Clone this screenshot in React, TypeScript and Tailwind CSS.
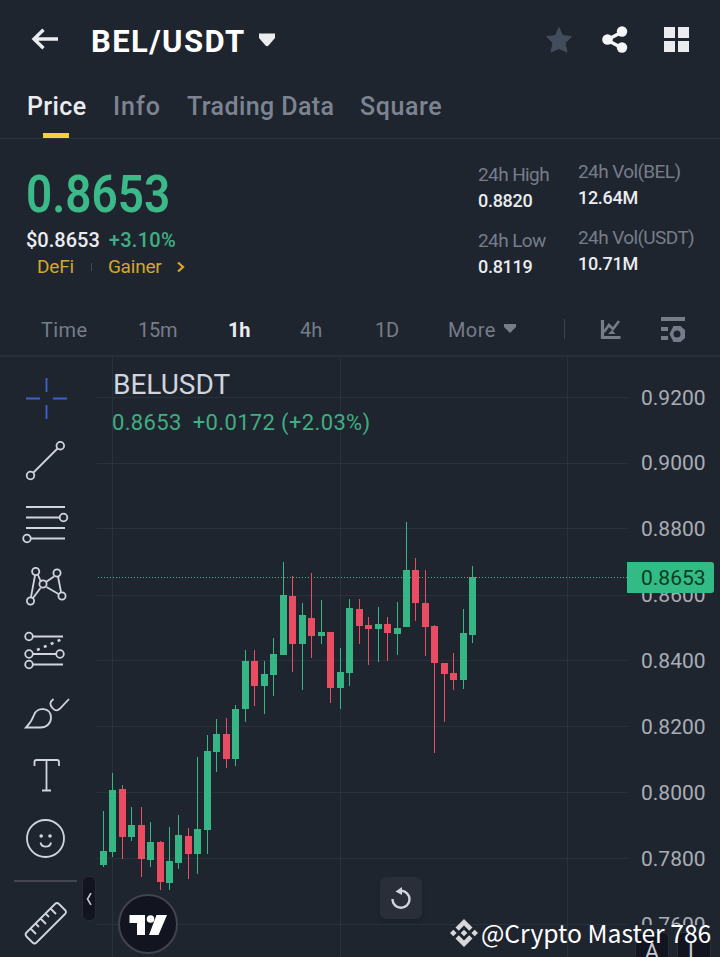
import type { ReactNode } from 'react'

type Candle = [x: number, high: number, top: number, bottom: number, low: number, up: number]

// x is the left side of the body, the rest are y positions
const candles: Candle[] = [
  [100, 811, 851, 865, 867, 1],
  [109, 773, 790, 852, 857, 1],
  [119, 785, 789, 837, 859, 0],
  [128, 807, 825, 837, 841, 1],
  [138, 807, 825, 859, 877, 0],
  [147, 822, 842, 860, 867, 1],
  [157, 841, 842, 882, 890, 0],
  [166, 827, 861, 883, 890, 1],
  [175, 815, 835, 863, 869, 1],
  [185, 828, 836, 854, 879, 0],
  [194, 757, 829, 854, 874, 1],
  [204, 735, 751, 830, 854, 1],
  [213, 719, 734, 752, 772, 1],
  [223, 718, 734, 759, 768, 0],
  [232, 705, 709, 759, 766, 1],
  [242, 650, 661, 709, 722, 1],
  [251, 650, 661, 686, 706, 0],
  [261, 661, 674, 686, 714, 1],
  [270, 638, 654, 675, 696, 1],
  [280, 562, 595, 655, 655, 1],
  [289, 576, 596, 644, 672, 0],
  [299, 603, 615, 644, 690, 1],
  [308, 573, 618, 636, 658, 0],
  [318, 600, 632, 636, 644, 1],
  [327, 632, 632, 688, 703, 0],
  [337, 648, 672, 688, 709, 1],
  [346, 599, 608, 673, 686, 1],
  [356, 599, 609, 626, 644, 0],
  [365, 617, 625, 629, 665, 0],
  [375, 607, 624, 629, 662, 1],
  [384, 617, 624, 633, 661, 0],
  [394, 602, 628, 634, 655, 1],
  [403, 522, 570, 627, 627, 1],
  [412, 558, 570, 603, 621, 0],
  [422, 570, 603, 627, 656, 0],
  [431, 625, 626, 663, 753, 0],
  [441, 663, 663, 674, 722, 0],
  [450, 653, 673, 680, 690, 0],
  [460, 609, 633, 680, 689, 1],
  [469, 566, 577, 635, 643, 1],
]

const gridRows = [397, 463, 528, 595, 660, 726, 792, 858, 924]
const gridCols = [112, 340, 567]
const prices = ['0.9200', '0.9000', '0.8800', '0.8600', '0.8400', '0.8200', '0.8000', '0.7800', '0.7600']

function Header() {
  return (
    <header className="flex h-20 items-center pl-[31px] pr-[31px]">
      <svg className="-mt-0.5" width="28" height="22" viewBox="0 0 28 22" fill="none" stroke="#eaecef" strokeWidth="3.400">
        <path d="M27 11H3M12.500 1.800L3 11l9.500 9.200" />
      </svg>
      <h1 className="ml-8 mt-0.5 w-[155px] whitespace-nowrap text-[31px] font-bold leading-none tracking-[1.4px] text-white">BEL/USDT</h1>
      <svg className="ml-3" width="18" height="14" viewBox="0 0 18 14" fill="#eaecef">
        <path d="M1 .5h16v4.500l-6.500 7.500q-1.500 1.500-3 0L1 5z" />
      </svg>
      <div className="ml-auto flex items-center">
        <svg width="28" height="28" viewBox="0 0 28 28" fill="#434c5a" stroke="#434c5a" strokeLinejoin="round">
          <path d="M14 1.500l3.700 8.200 8.800.8-6.500 6.300 2 9.200-8-3.500-8 3.500 2-9.200-6.500-6.300 8.800-.8z" />
        </svg>
        <svg className="ml-7 mr-px" width="27" height="28" viewBox="0 0 27 28" fill="#f4f5f7">
          <path d="M21 6L6 14l15 8" fill="none" stroke="#f4f5f7" strokeWidth="3.400" />
          <circle cx="21" cy="5.500" r="5.200" />
          <circle cx="6.500" cy="13.500" r="5.300" />
          <circle cx="21" cy="21.500" r="5.200" />
        </svg>
        <svg className="-mt-px ml-[35px]" width="25" height="25" viewBox="0 0 25 25" fill="#eaecef">
          <path d="M0 0h11v11H0zM14 0h11v11H14zM0 14h11v11H0zM14 14h11v11H14z" />
        </svg>
      </div>
    </header>
  )
}

function Tabs() {
  return (
    <nav className="flex h-[59px] border-b border-[#2c333d] pl-[27px] pt-3 text-[25px] font-medium leading-[30px] text-[#7d8491]">
      <div className="flex w-[86px] flex-col">
        <span className="whitespace-nowrap tracking-[0.4px] text-[#eaecef]">Price</span>
        <span className="ml-4 mt-[11px] h-[5px] w-[26px] bg-[#f2d046]" />
      </div>
      <span className="w-[74px] tracking-[1px]">Info</span>
      <span className="w-[173px] whitespace-nowrap tracking-[0.4px]">Trading Data</span>
      <span className="tracking-[0.6px]">Square</span>
    </nav>
  )
}

function Stat({ label, value }: { label: string; value: string }) {
  return (
    <div className="h-[66px] whitespace-nowrap">
      <p className="text-[19px] leading-[26px] tracking-[-0.6px] text-[#767d89]">{label}</p>
      <p className="text-lg font-medium leading-[26px] tracking-[-0.3px] text-[#eaecef]">{value}</p>
    </div>
  )
}

function Summary() {
  return (
    <section className="flex h-[166px]">
      <div className="w-[478px] pl-[26px] pt-[29px]">
        <p className="origin-left scale-x-[0.9] text-[51px] font-semibold leading-[53px] text-[#3cb988]">0.8653</p>
        <p className="mt-1.5 flex gap-[9px] text-xl font-medium leading-[26px]">
          <span className="text-[#eaecef]">$0.8653</span>
          <span className="tracking-[0.3px] text-[#3fae83]">+3.10%</span>
        </p>
        <p className="flex items-center pl-[11px] text-[19px] leading-7 tracking-[-0.200px] text-[#d3a62c]">
          <span>DeFi</span>
          <span className="ml-[17px] mr-[16px] h-2 w-px bg-[#434954]" />
          <span>Gainer</span>
          <svg className="ml-[15px]" width="8" height="12" viewBox="0 0 8 12" fill="none" stroke="#dba72c" strokeWidth="2.200">
            <path d="M1 1.500L6 6l-5 4.500" />
          </svg>
        </p>
      </div>
      <div className="w-[100px] pt-[23px]">
        <Stat label="24h High" value="0.8820" />
        <Stat label="24h Low" value="0.8119" />
      </div>
      <div className="pt-5">
        <Stat label="24h Vol(BEL)" value="12.64M" />
        <Stat label="24h Vol(USDT)" value="10.71M" />
      </div>
    </section>
  )
}

function Intervals() {
  return (
    <div className="flex h-[52px] items-center border-b-2 border-[#292f39] pl-[41px] text-xl tracking-[0.4px] text-[#767d89]">
      <span className="w-[97px]">Time</span>
      <span className="w-[90px] tracking-[-0.2px]">15m</span>
      <span className="w-[72px] font-bold tracking-[-0.2px] text-[#eaecef]">1h</span>
      <span className="w-[75px] tracking-[0px]">4h</span>
      <span className="w-[73px] tracking-[-0.3px]">1D</span>
      <span className="w-14">More</span>
      <svg className="-mt-1" width="12" height="9" viewBox="0 0 12 9" fill="#767d89">
        <path d="M0 0h12v3L6 9 0 3z" />
      </svg>
      <span className="-mt-0.5 ml-[48px] h-5 w-px bg-[#3b424d]" />
      <svg className="-mt-0.5 ml-[35px]" width="21" height="21" viewBox="0 0 21 21" fill="none" stroke="#767d89">
        <path d="M2.500 1v17.500h18" strokeWidth="3.200" />
        <path d="M4 13l5-7 4 4 6-8" strokeWidth="2.500" />
        <path d="M8 15l4-4 3.500 4z" fill="#767d89" stroke="none" />
      </svg>
      <svg className="ml-[39px]" width="26" height="26" viewBox="0 0 26 26" fill="#767d89">
        <path d="M1 0h24v4H1zM1 10h7v4H1zM1 19h7v4H1z" />
        <path fillRule="evenodd" d="M13.500 9h7l4.500 4v8l-4.500 4h-7l-4-8zM17 13.500a3.500 3.500 0 1 0 0 7 3.500 3.500 0 0 0 0-7z" />
      </svg>
    </div>
  )
}

function Tool({ children }: { children: ReactNode }) {
  return (
    <svg className="shrink-0" width="48" height="63" viewBox="0 0 48 63" fill="none" stroke="#d1d4dc" strokeWidth="1.800">
      {children}
    </svg>
  )
}

function Toolbar() {
  return (
    <aside className="relative flex w-[97px] flex-col pl-[22px] pt-[10px]">
      <Tool>
        <path d="M24.500 11v14M24.500 38v14M4 31.500h14M31 31.500h14" stroke="#3d62c9" />
      </Tool>
      <Tool>
        <path d="M11.500 42.500L35.500 18.500" />
        <circle cx="8.500" cy="45.500" r="3.800" />
        <circle cx="38.300" cy="15.700" r="3.800" />
      </Tool>
      <Tool>
        <path d="M4 14h39M4 24.500h34M4 35h39M9 45.500h34" />
        <circle cx="41.500" cy="24.500" r="3.800" />
        <circle cx="5" cy="45.500" r="3.800" />
      </Tool>
      <Tool>
        <path d="M13 19.500L9 41M16 19l3 7M24 26l8-5.500M18.500 32L11 42M36 20.500L39 36M24.500 31L36.500 38" />
        <circle cx="13.700" cy="15.500" r="3.600" />
        <circle cx="35" cy="17" r="3.600" />
        <circle cx="21" cy="28" r="3.600" />
        <circle cx="8.500" cy="45" r="3.600" />
        <circle cx="40" cy="40" r="3.600" />
      </Tool>
      <Tool>
        <path d="M11 17.500h30M11 35h23M11 45.500h30" />
        <path d="M15 31L39 20.500" strokeWidth="2.500" strokeDasharray="3 4.500" />
        <circle cx="7" cy="17.500" r="3.800" />
        <circle cx="7" cy="35" r="3.800" />
        <circle cx="38" cy="35" r="3.800" />
        <circle cx="7" cy="45.500" r="3.800" />
      </Tool>
      <Tool>
        <path d="M4 45.500c4-4 6-7 8-12.500 3-8.500 17-8 17 2.500 0 6-4.500 10-10.500 10zM31.500 17c-4 3-4 6-1 9 2.500 3 5 3 7.500.5L47 17" />
      </Tool>
      <Tool>
        <path d="M12.500 21v-4q0-2 2-2h20.500q2 0 2 2v4M24.500 15v30M20 45.500h9" />
      </Tool>
      <Tool>
        <circle cx="23.500" cy="30.500" r="18.500" />
        <circle cx="19.200" cy="28" r="1.800" fill="#d1d4dc" stroke="none" />
        <circle cx="28" cy="28" r="1.800" fill="#d1d4dc" stroke="none" />
        <path d="M18.500 34.500c1 5.500 9.500 5.500 10.500 0" />
      </Tool>
      <div className="-ml-2 mt-[9px] h-0.5 w-[63px] shrink-0 bg-[#434650]" />
      <svg className="mt-4 shrink-0" width="48" height="52" viewBox="0 0 48 52" fill="none" stroke="#d1d4dc" strokeWidth="1.800">
        <path d="M4.500 34.500L33 6q2-2 4 0l6 6q2 2 0 4L14.500 44.500q-2 2-4 0l-6-6q-2-2 0-4zM9 31l5 5M14 26l3 3M19 21l5 5M24 16l3 3M29 11l5 5" />
      </svg>
      <button className="absolute left-[82px] top-[519px] flex h-[45px] w-[14px] items-center justify-center rounded-md border border-[#272b36] bg-[#12151f]">
        <svg className="shrink-0" width="6" height="12" viewBox="0 0 6 12" fill="none" stroke="#c5c8d0" strokeWidth="1.600">
          <path d="M5 0L1.500 6 5 12" />
        </svg>
      </button>
    </aside>
  )
}

function Chart() {
  return (
    <div className="relative w-[530px]">
      <svg width="530" height="600" viewBox="97 357 530 600" shapeRendering="crispEdges">
        {gridRows.map((y) => (
          <rect key={y} x="97" y={y} width="530" height="1" fill="#2b313b" />
        ))}
        {gridCols.map((x) => (
          <rect key={x} x={x} y="357" width="1" height="600" fill="#2b313b" />
        ))}
        <path d="M98 577.500H627" stroke="#48b58f" strokeDasharray="1 2" />
        {candles.map(([x, high, top, bottom, low, up]) => (
          <g key={x} fill={up ? '#36b585' : '#ea4d62'}>
            <rect x={x + 3} y={high} width="1" height={low - high} />
            <rect x={x} y={top} width="7" height={bottom - top} />
          </g>
        ))}
      </svg>
      <div className="absolute left-[15px] top-3 whitespace-nowrap">
        <h2 className="pl-px text-[28px] leading-8 text-[#d1d4dc]">BELUSDT</h2>
        <p className="mt-2 flex gap-[11px] text-[22px] leading-7 tracking-[0.35px] text-[#40ad82]">
          <span>0.8653</span>
          <span>+0.0172 (+2.03%)</span>
        </p>
      </div>
      <div className="absolute left-[21px] top-[537px] flex h-[60px] w-[60px] items-center justify-center rounded-full border-2 border-[#41444e] bg-[#12151f]">
        <svg className="mt-0.5" width="38" height="20" viewBox="0 0 38 20" fill="#fff">
          <path d="M.5 0h15.500v20H8V8H.5zM27.500 0H38l-8.500 20H20z" />
          <circle cx="21.500" cy="4" r="3.800" />
        </svg>
      </div>
      <button className="absolute left-[283px] top-[520px] flex h-[42px] w-[42px] items-center justify-center rounded-md bg-[#2a2e39] shadow-md">
        <svg width="20" height="22" viewBox="0 0 20 22" fill="none" stroke="#d1d4dc" strokeWidth="2.400">
          <path d="M1.500 12a8.500 8.500 0 1 0 8.500-8.200" />
          <path d="M4.500 4.500L11 0v8z" fill="#d1d4dc" stroke="none" />
        </svg>
      </button>
    </div>
  )
}

function PriceAxis() {
  return (
    <div className="relative flex w-[93px] flex-col pt-2">
      {prices.map((price) => (
        <span key={price} className="h-[66px] shrink-0 pl-3.5 text-[21px] leading-[66px] text-[#a9adb6] first:h-[65px]">
          {price}
        </span>
      ))}
      <div className="absolute left-0 top-[205px] h-[31px] w-[87px] rounded-r-[3px] bg-[#32bb84] pl-3.5 text-[21px] leading-[32px] text-[#0b3b25]">0.8653</div>
      {/* scale mode buttons, they cover the end of the axis */}
      <div className="absolute left-0 top-[568px] flex h-8 w-[93px] gap-2 overflow-hidden bg-[#1f252f] pl-2 pt-[7px] text-[22px] leading-[38px] text-[#c7cad2]">
        <span className="h-9 w-[34px] shrink-0 rounded-md border border-[#292d37] bg-[#12151f] text-center">A</span>
        <span className="h-9 w-[34px] shrink-0 rounded-md border border-[#292d37] bg-[#12151f] text-center">L</span>
      </div>
    </div>
  )
}

function Watermark() {
  return (
    <div className="absolute left-[450px] top-[558px] flex h-9 items-center gap-[3px] whitespace-nowrap font-['Noto_Sans_CJK_SC','Noto_Sans',sans-serif] text-[24.700px] leading-none text-white">
      <svg width="28" height="28" viewBox="0 0 28 28" fill="#d7d8da">
        <path d="M14 0l8.500 8.500-3.300 3.300L14 6.600l-5.200 5.200-3.300-3.300zM14 28l8.500-8.500-3.300-3.300-5.200 5.200-5.200-5.200-3.300 3.300zM3.300 10.700L6.600 14l-3.300 3.300L0 14zM24.700 10.700L28 14l-3.300 3.300-3.300-3.300zM14 10.700l3.300 3.300-3.300 3.300-3.300-3.300z" />
      </svg>
      <span className="-mt-0.5">@Crypto Master 786</span>
    </div>
  )
}

const App = () => {
  return (
    <div className="h-[957px] w-[720px] overflow-hidden bg-[#1f252f] font-[Roboto,sans-serif]">
      <Header />
      <Tabs />
      <Summary />
      <Intervals />
      <main className="relative flex h-[600px] overflow-hidden">
        <Toolbar />
        <Chart />
        <PriceAxis />
        <Watermark />
      </main>
    </div>
  )
}

export default App
